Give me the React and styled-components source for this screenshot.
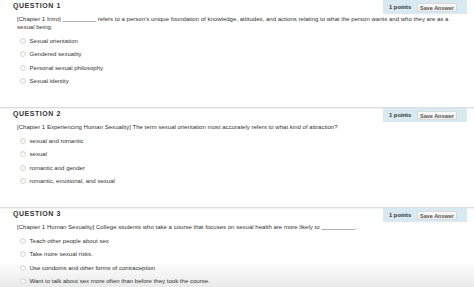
import { createGlobalStyle, styled } from "styled-components";

const GlobalStyle = createGlobalStyle`
  html, body {
    margin: 0;
    height: 100%;
  }
  body {
    font-family: "Liberation Sans", Arial, sans-serif;
    color: #333;
    background: linear-gradient(to bottom, #fff 0, #fff 262px, #e9e9e9 287px);
    overflow: hidden;
  }
`;

const questions = [
  {
    number: 1,
    prompt:
      "[Chapter 1 Intro] __________ refers to a person's unique foundation of knowledge, attitudes, and actions relating to what the person wants and who they are as a sexual being.",
    options: [
      "Sexual orientation",
      "Gendered sexuality",
      "Personal sexual philosophy",
      "Sexual identity",
    ],
  },
  {
    number: 2,
    prompt:
      "[Chapter 1 Experiencing Human Sexuality] The term sexual orientation most accurately refers to what kind of attraction?",
    options: [
      "sexual and romantic",
      "sexual",
      "romantic and gender",
      "romantic, emotional, and sexual",
    ],
  },
  {
    number: 3,
    prompt:
      "[Chapter 1 Human Sexuality] College students who take a course that focuses on sexual health are more likely to __________.",
    options: [
      "Teach other people about sex",
      "Take more sexual risks.",
      "Use condoms and other forms of contraception",
      "Want to talk about sex more often than before they took the course.",
    ],
  },
];

const App = () => {
  return (
    <>
      <GlobalStyle />
      <Page>
        {questions.map((q, i) => (
          <Block key={q.number} $first={i === 0}>
            <Header>
              <Title>QUESTION {q.number}</Title>
              <Points>
                <PointsLabel>1 points</PointsLabel>
                <SaveButton>Save Answer</SaveButton>
              </Points>
            </Header>
            <Prompt>{q.prompt}</Prompt>
            <Options>
              {q.options.map((opt) => (
                <Option key={opt}>
                  <Radio />
                  <span>{opt}</span>
                </Option>
              ))}
            </Options>
          </Block>
        ))}
      </Page>
    </>
  );
};

export default App;

const Page = styled.div`
  width: 474px;
`;

const Block = styled.div`
  border-top: ${(p) => (p.$first ? "none" : "1px solid #dcdcdc")};
  box-shadow: ${(p) => (p.$first ? "none" : "inset 0 1px 0 #f2f2f2")};
  padding-bottom: 19px;
`;

const Header = styled.div`
  display: flex;
  justify-content: space-between;
  align-items: flex-start;
  height: 14px;
  padding: 0 7px 0 13px;
`;

const Title = styled.div`
  margin-top: 2px;
  font-size: 7px;
  line-height: 7px;
  font-weight: bold;
  letter-spacing: 0.55px;
  color: #333;
`;

const Points = styled.div`
  display: flex;
  align-items: center;
  justify-content: space-between;
  box-sizing: border-box;
  width: 84px;
  height: 14px;
  padding: 0 10px 0 6px;
  background: #d8e9f1;
`;

const PointsLabel = styled.span`
  font-size: 5.8px;
  font-weight: bold;
  color: #333;
`;

const SaveButton = styled.span`
  box-sizing: border-box;
  width: 40px;
  height: 9px;
  line-height: 8px;
  text-align: center;
  font-size: 5.5px;
  font-weight: bold;
  color: #555;
  background: linear-gradient(#fafafa, #ededed);
  border: 0.5px solid #dadada;
  border-radius: 1px;
`;

const Prompt = styled.div`
  margin-top: 1px;
  padding: 0 18px 0 17px;
  font-size: 6.05px;
  line-height: 8px;
  color: #333;
`;

const Options = styled.div`
  margin-top: 3px;
  padding-left: 20px;
`;

const Option = styled.div`
  display: flex;
  align-items: center;
  gap: 3.5px;
  height: 13.5px;
  font-size: 6.05px;
  color: #333;
`;

const Radio = styled.span`
  box-sizing: border-box;
  width: 6px;
  height: 6px;
  border-radius: 50%;
  border: 0.6px solid #d6d6d6;
  background: linear-gradient(#f3f3f3, #fff);
`;
